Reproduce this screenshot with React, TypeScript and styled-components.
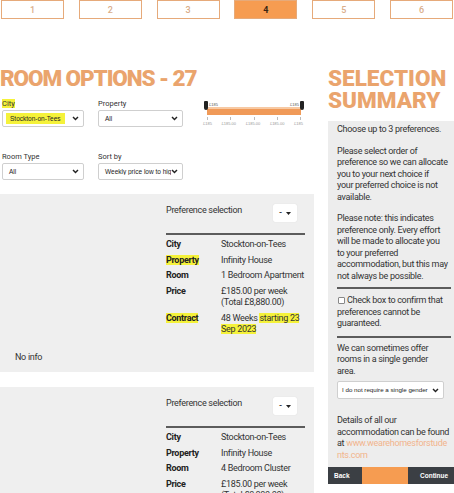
import React from "react"
import styled, { createGlobalStyle } from "styled-components"

const GlobalStyle = createGlobalStyle`
  * { box-sizing: border-box; }
  html, body { margin: 0; padding: 0; background: #fff; }
  body {
    font-family: Roboto, "Liberation Sans", sans-serif;
    color: #333;
    overflow: hidden;
  }
`

const Page = styled.div`
  width: 454px;
  height: 493px;
  overflow: hidden;
`

// steps
const Steps = styled.div`
  display: flex;
  justify-content: space-between;
  padding: 0 1px;
`
const Step = styled.div<{ $active?: boolean }>`
  width: 63px;
  height: 19px;
  border: 1.5px solid #e6aa7a;
  background: ${(p) => (p.$active ? "#f69c51" : "#fff")};
  color: ${(p) => (p.$active ? "#3b2412" : "#d9ad8a")};
  font-size: 9px;
  font-weight: ${(p) => (p.$active ? 700 : 500)};
  display: flex;
  align-items: center;
  justify-content: center;
`

const Main = styled.div`
  display: grid;
  grid-template-columns: 314px 126px;
  column-gap: 14px;
  padding-top: 48px;
  align-items: start;
`

const Title = styled.h1<{ $spacing?: number }>`
  margin: 0;
  font-size: 22.5px;
  line-height: 22px;
  font-weight: 900;
  letter-spacing: ${(p) => p.$spacing ?? -1.1}px;
  color: #eaa46d;
  white-space: nowrap;
`

// filters
const Filters = styled.div`
  display: flex;
  flex-direction: column;
  gap: 25px;
  padding: 10px 0 0 2px;
`
const FilterRow = styled.div`
  display: flex;
  gap: 14px;
  align-items: flex-start;
`
const Field = styled.div<{ $w: number }>`
  width: ${(p) => p.$w}px;
  display: flex;
  flex-direction: column;
  gap: 1px;
`
const Label = styled.div`
  font-size: 7.5px;
  line-height: 10px;
  color: #333;
`
const SelectBox = styled.div<{ $h?: number }>`
  height: ${(p) => p.$h || 17}px;
  background: #fff;
  border: 1px solid #cfcfcf;
  border-radius: 2px;
  display: flex;
  align-items: center;
  justify-content: space-between;
  padding: 0 4px 0 3px;
  font-family: "Liberation Sans", sans-serif;
  font-size: 6.5px;
  letter-spacing: 0;
  color: #222;
  white-space: nowrap;
  overflow: hidden;
`
const SelectText = styled.span<{ $mark?: boolean; $tight?: boolean }>`
  background: ${(p) => (p.$mark ? "#f5f23a" : "transparent")};
  padding: ${(p) => (p.$mark ? "2px 4px" : p.$tight ? "0 1px" : "0 3px")};
  font-size: ${(p) => (p.$tight ? "6.2px" : "inherit")};
  overflow: hidden;
`
const Mark = styled.span`
  background: #f5f23a;
`

const Chevron = () => (
  <svg width="7" height="5" viewBox="0 0 7 5" style={{ flex: "none" }}>
    <path d="M1 1 L3.5 3.6 L6 1" fill="none" stroke="#222" strokeWidth="1.4" />
  </svg>
)

// slider
const Slider = styled.div`
  width: 100px;
  margin-left: 6px;
  padding-top: 3px;
  font-family: "Liberation Sans", sans-serif;
`
const SliderTop = styled.div`
  display: flex;
  justify-content: space-between;
  padding: 0 4px 0 6px;
  font-size: 4px;
  line-height: 5px;
  color: #555;
`
const Track = styled.div`
  margin: 0 2px 0 4px;
  height: 8px;
  background: #f09a58;
  border-top: 2px solid #f7c9a3;
  position: relative;
`
const Handle = styled.div<{ $side: "left" | "right" }>`
  position: absolute;
  top: -8px;
  ${(p) => (p.$side === "left" ? "left: -3px;" : "right: -3px;")}
  width: 4px;
  height: 9px;
  background: #222;
  border-radius: 1px 1px 2px 2px;
`
const Ticks = styled.div`
  display: flex;
  justify-content: space-between;
  margin: 2px 2px 0 4px;
  height: 3px;
`
const Tick = styled.div`
  width: 1px;
  height: 3px;
  background: #bbb;
`
const TickLabels = styled.div`
  display: flex;
  justify-content: space-between;
  margin-top: 1px;
  font-size: 4px;
  color: #999;
`

// cards
const Card = styled.div<{ $gap?: number }>`
  margin-top: ${(p) => p.$gap ?? 14}px;
  background: #efefef;
  display: flex;
  min-height: 178px;
`
const CardMedia = styled.div`
  width: 166px;
  flex: none;
  display: flex;
  align-items: flex-end;
  padding: 0 0 9px 15px;
  font-size: 9px;
  line-height: 11.5px;
  letter-spacing: -0.3px;
`
const CardBody = styled.div`
  flex: 1;
  padding: 10px 9px 10px 0;
  font-size: 9px;
  line-height: 11.5px;
  letter-spacing: -0.3px;
`
const PrefRow = styled.div`
  display: flex;
  justify-content: space-between;
  align-items: flex-start;
`
const PrefText = styled.span`
  padding-top: 1px;
`
const PrefSelect = styled.div`
  width: 24px;
  height: 18px;
  margin-right: 8px;
  background: #fff;
  border-radius: 2px;
  box-shadow: 0 0 1px rgba(0, 0, 0, 0.15);
  display: flex;
  align-items: center;
  justify-content: center;
  gap: 4px;
  font-size: 8px;
  font-weight: bold;
  color: #222;
`
const Divider = styled.div<{ $top?: number; $bottom?: number }>`
  height: 2px;
  background: #5c5c5c;
  margin: ${(p) => p.$top ?? 11}px 0 ${(p) => p.$bottom ?? 4}px;
`
const Details = styled.div`
  display: grid;
  grid-template-columns: 55px 1fr;
  row-gap: 4px;
`
const Key = styled.div`
  font-weight: bold;
  color: #222;
`
const Value = styled.div`
  color: #333;
`

// sidebar
const Sidebar = styled.div`
  display: flex;
  flex-direction: column;
`
const Summary = styled.div`
  margin-top: 10px;
  background: #ededed;
  display: flex;
  flex-direction: column;
`
const SummaryBody = styled.div`
  padding: 3px 3px 6px 9px;
  font-size: 9px;
  line-height: 11.5px;
  letter-spacing: -0.3px;
  color: #333;
`
const Para = styled.p<{ $gap?: number }>`
  margin: 0 0 ${(p) => p.$gap ?? 10}px;
`
const Check = styled.span`
  display: inline-block;
  width: 7px;
  height: 7px;
  border: 1px solid #888;
  background: #fff;
  border-radius: 1px;
  margin: 0 2px 0 1px;
  vertical-align: -0.5px;
`
const Link = styled.span`
  color: #f2b48c;
`
const Buttons = styled.div`
  display: grid;
  grid-template-columns: 34px 46px 46px;
  height: 17px;
`
const Btn = styled.div<{ $tone: "dark" | "orange"; $indent?: number }>`
  background: ${(p) => (p.$tone === "dark" ? "#3b3f44" : "#f69c51")};
  color: #fff;
  font-family: "Liberation Sans", sans-serif;
  font-weight: bold;
  font-size: 6.5px;
  display: flex;
  align-items: center;
  padding-left: ${(p) => p.$indent ?? 6}px;
`

type Row = { key: React.ReactNode; value: React.ReactNode }

const RoomCard = ({ rows, info, gap }: { rows: Row[]; info?: string; gap?: number }) => (
  <Card $gap={gap}>
    <CardMedia>{info}</CardMedia>
    <CardBody>
      <PrefRow>
        <PrefText>Preference selection</PrefText>
        <PrefSelect>
          <span>-</span>
          <svg width="5" height="3" viewBox="0 0 5 3">
            <path d="M0 0 H5 L2.5 3 Z" fill="#222" />
          </svg>
        </PrefSelect>
      </PrefRow>
      <Divider />
      <Details>
        {rows.map((r, i) => (
          <React.Fragment key={i}>
            <Key>{r.key}</Key>
            <Value>{r.value}</Value>
          </React.Fragment>
        ))}
      </Details>
    </CardBody>
  </Card>
)

export default function App() {
  const card1: Row[] = [
    { key: "City", value: "Stockton-on-Tees" },
    { key: <Mark>Property</Mark>, value: "Infinity House" },
    { key: "Room", value: "1 Bedroom Apartment" },
    { key: "Price", value: <>£185.00 per week<br />(Total £8,880.00)</> },
    {
      key: <Mark>Contract</Mark>,
      value: <>48 Weeks <Mark>starting 23</Mark><br /><Mark>Sep 2023</Mark></>,
    },
  ]
  const card2: Row[] = [
    { key: "City", value: "Stockton-on-Tees" },
    { key: "Property", value: "Infinity House" },
    { key: "Room", value: "4 Bedroom Cluster" },
    { key: "Price", value: <>£185.00 per week<br />(Total £8,880.00)</> },
    { key: "Contract", value: <>48 Weeks starting 23<br />Sep 2023</> },
  ]

  return (
    <Page>
      <GlobalStyle />
      <Steps>
        {[1, 2, 3, 4, 5, 6].map((n) => (
          <Step key={n} $active={n === 4}>{n}</Step>
        ))}
      </Steps>
      <Main>
        <div>
          <Title>ROOM OPTIONS - 27</Title>
          <Filters>
            <FilterRow>
              <Field $w={82}>
                <Label><Mark>City</Mark></Label>
                <SelectBox>
                  <SelectText $mark>Stockton-on-Tees</SelectText>
                  <Chevron />
                </SelectBox>
              </Field>
              <Field $w={85}>
                <Label>Property</Label>
                <SelectBox>
                  <SelectText>All</SelectText>
                  <Chevron />
                </SelectBox>
              </Field>
              <Slider>
                <SliderTop>
                  <span>£185</span>
                  <span>£185</span>
                </SliderTop>
                <Track>
                  <Handle $side="left" />
                  <Handle $side="right" />
                </Track>
                <Ticks>
                  {[0, 1, 2, 3, 4].map((i) => <Tick key={i} />)}
                </Ticks>
                <TickLabels>
                  <span>£185</span>
                  <span>£185.00</span>
                  <span>£185.00</span>
                  <span>£185.00</span>
                  <span>£185</span>
                </TickLabels>
              </Slider>
            </FilterRow>
            <FilterRow>
              <Field $w={82}>
                <Label>Room Type</Label>
                <SelectBox>
                  <SelectText>All</SelectText>
                  <Chevron />
                </SelectBox>
              </Field>
              <Field $w={85}>
                <Label>Sort by</Label>
                <SelectBox>
                  <SelectText>Weekly price low to high</SelectText>
                  <Chevron />
                </SelectBox>
              </Field>
            </FilterRow>
          </Filters>
          <RoomCard rows={card1} info="No info" />
          <RoomCard rows={card2} gap={15} />
        </div>
        <Sidebar>
          <Title $spacing={0}>SELECTION<br />SUMMARY</Title>
          <Summary>
            <SummaryBody>
              <Para>Choose up to 3 preferences.</Para>
              <Para>
                Please select order of<br />
                preference so we can allocate<br />
                you to your next choice if<br />
                your preferred choice is not<br />
                available.
              </Para>
              <Para $gap={0}>
                Please note: this indicates<br />
                preference only. Every effort<br />
                will be made to allocate you<br />
                to your preferred<br />
                accommodation, but this may<br />
                not always be possible.
              </Para>
              <Divider $top={5} $bottom={6} />
              <Para $gap={0}>
                <Check />Check box to confirm that<br />
                preferences cannot be<br />
                guaranteed.
              </Para>
              <Divider $top={6} $bottom={5} />
              <Para $gap={4}>
                We can sometimes offer<br />
                rooms in a single gender<br />
                area.
              </Para>
              <SelectBox $h={18} style={{ marginRight: 7, marginBottom: 16 }}>
                <SelectText $tight>I do not require a single gender</SelectText>
                <Chevron />
              </SelectBox>
              <Para $gap={0}>
                Details of all our<br />
                accommodation can be found<br />
                at <Link>www.wearehomesforstude<br />nts.com</Link>
              </Para>
            </SummaryBody>
            <Buttons>
              <Btn $tone="dark">Back</Btn>
              <Btn $tone="orange" />
              <Btn $tone="dark" $indent={12}>Continue</Btn>
            </Buttons>
          </Summary>
        </Sidebar>
      </Main>
    </Page>
  )
}
